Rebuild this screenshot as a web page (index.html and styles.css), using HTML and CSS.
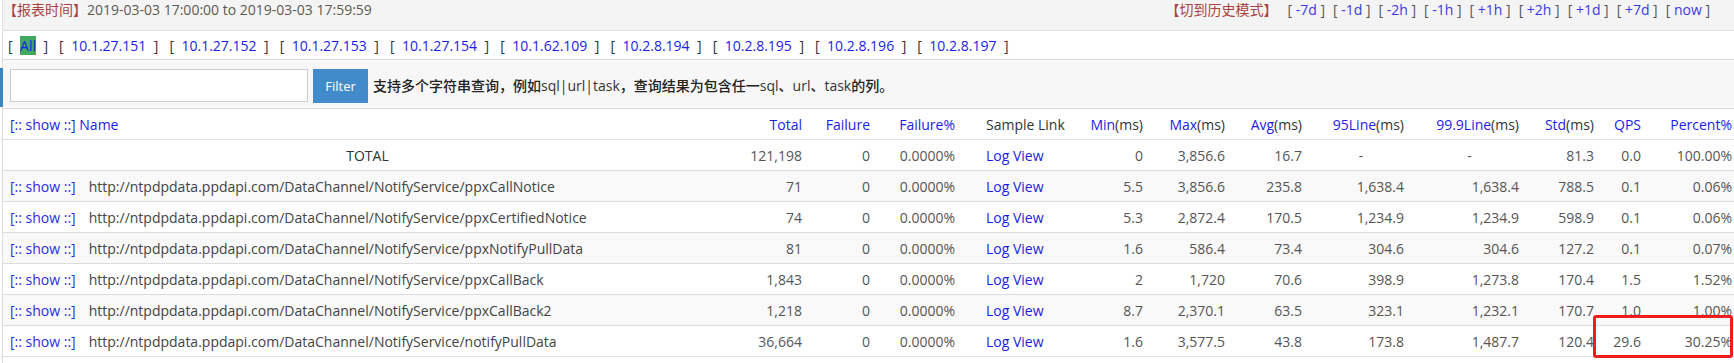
FILE: index.html
```html
<!DOCTYPE html>
<html lang="zh-CN">
<head>
	<meta charset="UTF-8">
	<title>Transaction Report</title>
	<link rel="stylesheet" href="styles.css">
</head>
<body>
<div class="page">
	<header class="report-head">
		<div class="report-time"><span class="mark">【报表时间】</span>2019-03-03 17:00:00 to 2019-03-03 17:59:59</div>
		<nav class="time-nav">
			<span class="mark">【切到历史模式】</span><span class="step">[ <a href="#">-7d</a> ]</span><span class="step">[ <a href="#">-1d</a> ]</span><span class="step">[ <a href="#">-2h</a> ]</span><span class="step">[ <a href="#">-1h</a> ]</span><span class="step">[ <a href="#">+1h</a> ]</span><span class="step">[ <a href="#">+2h</a> ]</span><span class="step">[ <a href="#">+1d</a> ]</span><span class="step">[ <a href="#">+7d</a> ]</span><span class="step">[ <a href="#">now</a> ]</span>
		</nav>
	</header>
	<nav class="ip-nav"><span class="grp">[<a href="#" class="current">All</a>]</span><span class="grp">[<a href="#">10.1.27.151</a>]</span><span class="grp">[<a href="#">10.1.27.152</a>]</span><span class="grp">[<a href="#">10.1.27.153</a>]</span><span class="grp">[<a href="#">10.1.27.154</a>]</span><span class="grp">[<a href="#">10.1.62.109</a>]</span><span class="grp">[<a href="#">10.2.8.194</a>]</span><span class="grp">[<a href="#">10.2.8.195</a>]</span><span class="grp">[<a href="#">10.2.8.196</a>]</span><span class="grp">[<a href="#">10.2.8.197</a>]</span></nav>
	<section class="filter">
		<div class="filter-row">
			<input type="text" class="filter-input">
			<button class="filter-btn">Filter</button>
			<span class="hint">支持多个字符串查询，例如<span class="latin">sql|url|task</span>，查询结果为包含任一<span class="latin">sql</span>、<span class="latin">url</span>、<span class="latin">task</span>的列。</span>
		</div>
	</section>
	<table class="report">
		<colgroup>
			<col style="width:729px"><col style="width:78px"><col style="width:68px"><col style="width:85px"><col style="width:117px"><col style="width:71px"><col style="width:82px"><col style="width:77px"><col style="width:102px"><col style="width:115px"><col style="width:75px"><col style="width:47px"><col style="width:85px">
		</colgroup>
		<thead>
			<tr>
				<th class="name"><a href="#">[:: show ::]</a> <a href="#">Name</a></th>
				<th><a href="#">Total</a></th>
				<th><a href="#">Failure</a></th>
				<th><a href="#">Failure%</a></th>
				<th class="sample">Sample Link</th>
				<th><a href="#">Min</a>(ms)</th>
				<th><a href="#">Max</a>(ms)</th>
				<th><a href="#">Avg</a>(ms)</th>
				<th><a href="#">95Line</a>(ms)</th>
				<th><a href="#">99.9Line</a>(ms)</th>
				<th><a href="#">Std</a>(ms)</th>
				<th><a href="#">QPS</a></th>
				<th class="pct"><a href="#">Percent%</a></th>
			</tr>
		</thead>
		<tbody>
			<tr>
				<td class="name total-name">TOTAL</td>
				<td>121,198</td><td>0</td><td>0.0000%</td><td class="sample"><a href="#">Log View</a></td>
				<td>0</td><td>3,856.6</td><td>16.7</td><td class="dash">-</td><td class="dash">-</td><td>81.3</td><td>0.0</td><td class="pct">100.00%</td>
			</tr>
			<tr>
				<td class="name"><a href="#" class="show">[:: show ::]</a>http://ntpdpdata.ppdapi.com/DataChannel/NotifyService/ppxCallNotice</td>
				<td>71</td><td>0</td><td>0.0000%</td><td class="sample"><a href="#">Log View</a></td>
				<td>5.5</td><td>3,856.6</td><td>235.8</td><td>1,638.4</td><td>1,638.4</td><td>788.5</td><td>0.1</td><td class="pct">0.06%</td>
			</tr>
			<tr>
				<td class="name"><a href="#" class="show">[:: show ::]</a>http://ntpdpdata.ppdapi.com/DataChannel/NotifyService/ppxCertifiedNotice</td>
				<td>74</td><td>0</td><td>0.0000%</td><td class="sample"><a href="#">Log View</a></td>
				<td>5.3</td><td>2,872.4</td><td>170.5</td><td>1,234.9</td><td>1,234.9</td><td>598.9</td><td>0.1</td><td class="pct">0.06%</td>
			</tr>
			<tr>
				<td class="name"><a href="#" class="show">[:: show ::]</a>http://ntpdpdata.ppdapi.com/DataChannel/NotifyService/ppxNotifyPullData</td>
				<td>81</td><td>0</td><td>0.0000%</td><td class="sample"><a href="#">Log View</a></td>
				<td>1.6</td><td>586.4</td><td>73.4</td><td>304.6</td><td>304.6</td><td>127.2</td><td>0.1</td><td class="pct">0.07%</td>
			</tr>
			<tr>
				<td class="name"><a href="#" class="show">[:: show ::]</a>http://ntpdpdata.ppdapi.com/DataChannel/NotifyService/ppxCallBack</td>
				<td>1,843</td><td>0</td><td>0.0000%</td><td class="sample"><a href="#">Log View</a></td>
				<td>2</td><td>1,720</td><td>70.6</td><td>398.9</td><td>1,273.8</td><td>170.4</td><td>1.5</td><td class="pct">1.52%</td>
			</tr>
			<tr>
				<td class="name"><a href="#" class="show">[:: show ::]</a>http://ntpdpdata.ppdapi.com/DataChannel/NotifyService/ppxCallBack2</td>
				<td>1,218</td><td>0</td><td>0.0000%</td><td class="sample"><a href="#">Log View</a></td>
				<td>8.7</td><td>2,370.1</td><td>63.5</td><td>323.1</td><td>1,232.1</td><td>170.7</td><td>1.0</td><td class="pct">1.00%</td>
			</tr>
			<tr>
				<td class="name"><a href="#" class="show">[:: show ::]</a>http://ntpdpdata.ppdapi.com/DataChannel/NotifyService/notifyPullData</td>
				<td>36,664</td><td>0</td><td>0.0000%</td><td class="sample"><a href="#">Log View</a></td>
				<td>1.6</td><td>3,577.5</td><td>43.8</td><td>173.8</td><td>1,487.7</td><td>120.4</td><td class="hl">29.6<span class="hl-mark"></span></td><td class="pct">30.25%</td>
			</tr>
		</tbody>
	</table>
</div>
</body>
</html>
```

FILE: styles.css
```css
* {margin:0;padding:0;box-sizing:border-box;}
html, body {overflow:hidden;}
body {font-family:"Open Sans","Noto Sans CJK SC",sans-serif;font-size:14px;line-height:19px;color:#333;background:#fff;}
a {color:#1c1ce8;text-decoration:none;}
.page {margin-left:2px;border-left:1px solid #ddd;min-height:100vh;}

.report-head {height:31px;background:#f4f4f4;border-bottom:1px solid #ddd;display:flex;justify-content:space-between;padding-right:24px;}
.mark {color:#a94442;font-family:"Noto Sans CJK SC",sans-serif;}
.report-time {color:#5b5b55;}
.time-nav {color:#555;}
.time-nav .mark {margin-right:2px;}
.time-nav .step {margin-left:8px;}
.time-nav a {color:#3a3ae6;}

.ip-nav {height:28px;padding:5px 0 0 5px;color:#333;}
.ip-nav .grp {margin-right:11px;}
.ip-nav a {margin:0 7.5px;}
.ip-nav .current {background:#41a862;}

.filter {background:#f7f7f7;border-top:1px solid #ddd;border-bottom:1px solid #ddd;padding:8px 0 1px 0;}
.filter-row {display:flex;align-items:flex-start;height:39px;margin-left:-3px;padding:1px 0 0 7px;border-left:3px solid #3a87c4;}
.filter-input {width:298px;height:33px;border:1px solid #ccc;background:#fff;}
.filter-btn {width:55px;height:34px;margin-left:5px;border:none;background:#428bca;color:#fff;font-family:"Open Sans",sans-serif;font-size:13px;}
.hint {margin-left:5px;line-height:34px;color:#222;font-weight:500;}
.hint .latin {font-weight:400;color:#333;}

.report {width:100%;border-collapse:separate;border-spacing:0;table-layout:fixed;}
.report th, .report td {height:31px;padding:0 8px;text-align:right;font-weight:normal;white-space:nowrap;overflow:visible;vertical-align:middle;}
.report th {height:30px;color:#333;}
.report td {border-top:1px solid #ddd;color:#555;}
.report tbody tr:nth-child(even) td {background:#f9f9f9;}
.report tbody tr:last-child td {height:32px;border-bottom:1px solid #ddd;}
.report .name {text-align:left;padding-left:7px;color:#444;}
.report .total-name {text-align:center;padding-left:8px;color:#333;}
.report .sample {text-align:left;padding-left:23px;}
.report .dash {text-align:center;}
.report .pct {padding-right:2px;}
.report .show {margin-right:13px;color:#2a2ae8;}
.report .hl {position:relative;}
.hl-mark {position:absolute;left:-9px;top:-11px;width:140px;height:43px;border:3px solid #f21c1c;border-radius:3px;}
```
